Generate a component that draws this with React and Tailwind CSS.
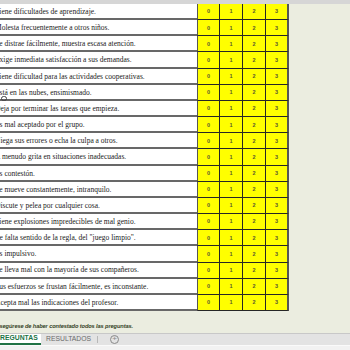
import React from 'react';

const preguntas = [
  'Tiene dificultades de aprendizaje.',
  'Molesta frecuentemente a otros niños.',
  'Se distrae fácilmente, muestra escasa atención.',
  'Exige inmediata satisfacción a sus demandas.',
  'Tiene dificultad para las actividades cooperativas.',
  'Está en las nubes, ensimismado.',
  'Deja por terminar las tareas que empieza.',
  'Es mal aceptado por el grupo.',
  'Niega sus errores o echa la culpa a otros.',
  'A menudo grita en situaciones inadecuadas.',
  'Es contestón.',
  'Se mueve constantemente, intranquilo.',
  'Discute y pelea por cualquier cosa.',
  'Tiene explosiones impredecibles de mal genio.',
  'Le falta sentido de la regla, del "juego limpio".',
  'Es impulsivo.',
  'Se lleva mal con la mayoría de sus compañeros.',
  'Sus esfuerzos se frustan fácilmente, es inconstante.',
  'Acepta mal las indicaciones del profesor.',
];

const App = () => {
  return (
    <div className="relative w-[350px] h-[350px] overflow-hidden bg-[#ebede0] flex flex-col font-['Liberation_Sans',sans-serif]">
      {/* borde superior de la hoja */}
      <div className="h-[4px] shrink-0 bg-[#d6d6d6]" />

      {/* filas de preguntas */}
      {preguntas.map((p, i) => (
        <div key={i} className="flex h-[16.16px] shrink-0">
          <div className="w-[197px] bg-white border-b-2 border-[#686868] overflow-hidden flex items-center pt-[1px]">
            <span className="ml-[-5px] whitespace-nowrap text-[7.5px] text-[#222] font-['Liberation_Serif',serif]">
              {p}
            </span>
          </div>
          {[0, 1, 2, 3].map((n) => (
            <div
              key={n}
              className={`w-[23px] bg-[#ffff00] border-b border-r border-[#262626] flex items-center justify-center text-[5.5px] font-bold text-[#5a5a30] ${n === 0 ? 'border-l border-l-[#555]' : ''} ${n === 3 ? 'border-r-2 border-r-[#555]' : ''}`}
            >
              {n}
            </div>
          ))}
        </div>
      ))}

      {/* marca del cursor */}
      <div className="absolute left-[1px] top-[96px] w-[6px] h-[5px] rounded-full border border-[#444]" />

      {/* nota final */}
      <div className="h-[22px] shrink-0 flex items-end pb-[2px]">
        <span className="ml-[-4.5px] whitespace-nowrap text-[5.7px] italic font-bold tracking-[-0.12px] text-[#364327]">
          Asegúrese de haber contestado todos las preguntas.
        </span>
      </div>

      {/* pestañas */}
      <div className="h-[12px] shrink-0 bg-[#e3e3e3] border-t border-[#c8c8c8] flex items-stretch">
        <div className="w-[41px] bg-white border-b-2 border-[#217346] flex items-center overflow-hidden">
          <span className="whitespace-nowrap text-[6.8px] font-bold text-[#217346] ml-[-4.5px]">PREGUNTAS</span>
        </div>
        <div className="flex items-center pl-[5px]">
          <span className="text-[6.8px] text-[#6a6a6a]">RESULTADOS</span>
        </div>
        <div className="ml-[6px] my-[2px] w-px bg-[#b8b8b8]" />
        <div className="ml-[12px] flex items-center">
          <div className="w-[9px] h-[9px] rounded-full border border-[#8a8a8a] flex items-center justify-center text-[8px] leading-none text-[#8a8a8a]">
            +
          </div>
        </div>
      </div>
      <div className="flex-1 bg-[#f2f2f2] border-t border-[#fafafa]" />
    </div>
  );
};

export default App;
